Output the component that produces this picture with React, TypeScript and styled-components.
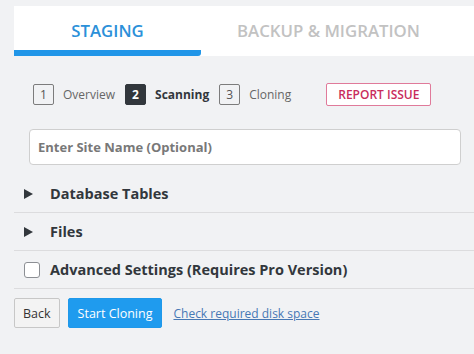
import styled, { createGlobalStyle } from "styled-components";

const GlobalStyle = createGlobalStyle`
  body {
    margin: 0;
    background-color: #f1f2f4;
    font-family: "Open Sans", "Noto Sans", sans-serif;
    color: #23282d;
  }
`;

const Page = styled.div`
  width: 474px;
  height: 354px;
  overflow: hidden;
  padding: 6px 0 0 14px;
  box-sizing: border-box;
`;

const TabBar = styled.div`
  display: flex;
  height: 50px;
  background-color: #ffffff;
`;

const Tab = styled.div<{ $active?: boolean }>`
  display: flex;
  align-items: center;
  justify-content: ${(p) => (p.$active ? "center" : "flex-start")};
  width: ${(p) => (p.$active ? "187px" : "auto")};
  padding-left: ${(p) => (p.$active ? "0" : "36px")};
  box-sizing: border-box;
  font-size: 16.8px;
  font-weight: 600;
  color: ${(p) => (p.$active ? "#2b90d9" : "#c2c2c2")};
  border-bottom: 6px solid ${(p) => (p.$active ? "#2196e8" : "transparent")};
  border-radius: 0 0 3px 0;
  padding-top: 5px;
`;

const Steps = styled.div`
  display: flex;
  align-items: center;
  margin: 27px 0 0 19px;
  height: 22px;
`;

const StepNum = styled.span<{ $current?: boolean }>`
  display: inline-flex;
  align-items: center;
  justify-content: center;
  width: 19px;
  height: 19px;
  border: 1px solid ${(p) => (p.$current ? "#32373c" : "#7c7c7c")};
  border-radius: 2px;
  background-color: ${(p) => (p.$current ? "#32373c" : "transparent")};
  color: ${(p) => (p.$current ? "#ffffff" : "#555")};
  font-size: 12px;
  font-weight: ${(p) => (p.$current ? 700 : 400)};
  margin-right: 9px;
`;

const StepLabel = styled.span<{ $current?: boolean }>`
  font-size: 12px;
  font-weight: ${(p) => (p.$current ? 700 : 400)};
  color: ${(p) => (p.$current ? "#32373c" : "#666")};
  margin-right: 10px;
`;

const ReportButton = styled.button`
  margin-left: 25px;
  height: 23px;
  padding: 0 11px;
  background-color: #ffffff;
  border: 1px solid #e07a9a;
  border-radius: 2px;
  color: #c92c5c;
  font-family: inherit;
  font-size: 12px;
  font-weight: 600;
`;

const SiteInput = styled.input`
  display: block;
  margin: 24px 0 0 15px;
  width: 432px;
  height: 36px;
  box-sizing: border-box;
  border: 1px solid #cfcfcf;
  border-radius: 4px;
  padding: 0 8px;
  font-family: inherit;
  font-size: 13px;
  font-weight: 700;
  background-color: #ffffff;
  &::placeholder {
    color: #787878;
  }
`;

const Sections = styled.div`
  margin-top: 10px;
`;

const Row = styled.div`
  display: flex;
  align-items: center;
  height: 37px;
  border-bottom: 1px solid #dcdcde;
  padding-left: 10px;
  font-size: 14.5px;
  font-weight: 700;
  color: #32373c;
`;

const Arrow = styled.span`
  width: 0;
  height: 0;
  border-top: 5px solid transparent;
  border-bottom: 5px solid transparent;
  border-left: 9px solid #32373c;
  margin-right: 17px;
`;

const Check = styled.span`
  width: 14px;
  height: 14px;
  border: 1px solid #8c8f94;
  border-radius: 3px;
  background-color: #ffffff;
  margin-right: 10px;
`;

const Actions = styled.div`
  display: flex;
  align-items: center;
  gap: 8px;
  margin-top: 9px;
`;

const Button = styled.button<{ $primary?: boolean }>`
  height: 30px;
  padding: 0 ${(p) => (p.$primary ? "9px" : "8px")};
  border: 1px solid ${(p) => (p.$primary ? "#1e98ea" : "#c7c7c7")};
  border-radius: 2px;
  background-color: ${(p) => (p.$primary ? "#1f9bee" : "#f3f3f3")};
  color: ${(p) => (p.$primary ? "#ffffff" : "#333")};
  font-family: inherit;
  font-size: 12.5px;
`;

const Link = styled.a`
  margin-left: 3px;
  color: #4778b4;
  font-size: 12px;
  text-decoration: underline;
`;

const App = () => {
  return (
    <Page>
      <GlobalStyle />
      <TabBar>
        <Tab $active>STAGING</Tab>
        <Tab>BACKUP &amp; MIGRATION</Tab>
      </TabBar>
      <Steps>
        <StepNum>1</StepNum>
        <StepLabel>Overview</StepLabel>
        <StepNum $current>2</StepNum>
        <StepLabel $current>Scanning</StepLabel>
        <StepNum>3</StepNum>
        <StepLabel>Cloning</StepLabel>
        <ReportButton>REPORT ISSUE</ReportButton>
      </Steps>
      <SiteInput placeholder="Enter Site Name (Optional)" />
      <Sections>
        <Row>
          <Arrow />
          Database Tables
        </Row>
        <Row>
          <Arrow />
          Files
        </Row>
        <Row>
          <Check />
          Advanced Settings (Requires Pro Version)
        </Row>
      </Sections>
      <Actions>
        <Button>Back</Button>
        <Button $primary>Start Cloning</Button>
        <Link href="#">Check required disk space</Link>
      </Actions>
    </Page>
  );
};

export default App;
